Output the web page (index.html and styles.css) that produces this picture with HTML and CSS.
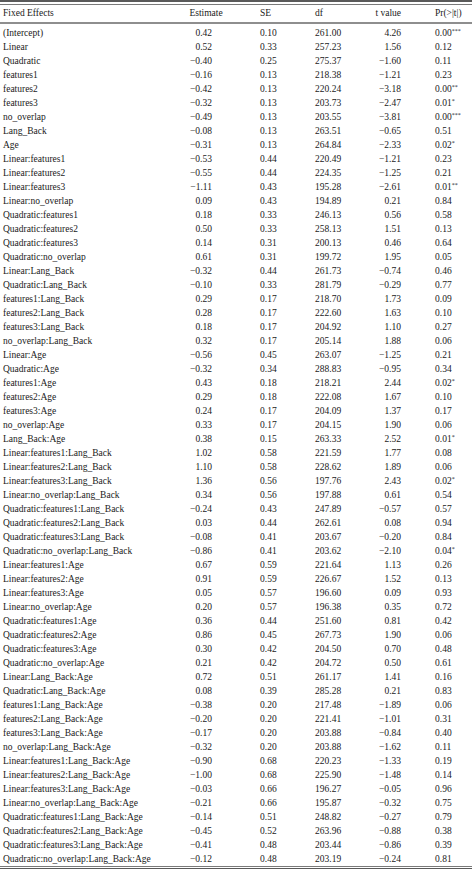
FILE: index.html
```html
<!DOCTYPE html>
<html>
<head>
<meta charset="utf-8">
<link rel="stylesheet" href="styles.css">
</head>
<body>
<div class="frame">
  <div class="rule-thick"></div>
  <div class="rule-thin"></div>
  <table class="fx">
    <colgroup>
      <col class="c-name"><col class="c-est"><col class="c-se"><col class="c-df"><col class="c-t"><col class="c-p">
    </colgroup>
    <thead>
      <tr class="head">
        <th class="name">Fixed Effects</th><th class="est-h">Estimate</th><th class="se">SE</th><th class="df">df</th><th class="t">t value</th><th class="p">Pr(&gt;|t|)</th>
      </tr>
    </thead>
    <tbody>
<tr><td class="name">(Intercept)</td><td class="est">0.42</td><td class="se">0.10</td><td class="df">261.00</td><td class="t">4.26</td><td class="p">0.00<sup>***</sup></td></tr>
<tr><td class="name">Linear</td><td class="est">0.52</td><td class="se">0.33</td><td class="df">257.23</td><td class="t">1.56</td><td class="p">0.12</td></tr>
<tr><td class="name">Quadratic</td><td class="est">−0.40</td><td class="se">0.25</td><td class="df">275.37</td><td class="t">−1.60</td><td class="p">0.11</td></tr>
<tr><td class="name">features1</td><td class="est">−0.16</td><td class="se">0.13</td><td class="df">218.38</td><td class="t">−1.21</td><td class="p">0.23</td></tr>
<tr><td class="name">features2</td><td class="est">−0.42</td><td class="se">0.13</td><td class="df">220.24</td><td class="t">−3.18</td><td class="p">0.00<sup>**</sup></td></tr>
<tr><td class="name">features3</td><td class="est">−0.32</td><td class="se">0.13</td><td class="df">203.73</td><td class="t">−2.47</td><td class="p">0.01<sup>*</sup></td></tr>
<tr><td class="name">no_overlap</td><td class="est">−0.49</td><td class="se">0.13</td><td class="df">203.55</td><td class="t">−3.81</td><td class="p">0.00<sup>***</sup></td></tr>
<tr><td class="name">Lang_Back</td><td class="est">−0.08</td><td class="se">0.13</td><td class="df">263.51</td><td class="t">−0.65</td><td class="p">0.51</td></tr>
<tr><td class="name">Age</td><td class="est">−0.31</td><td class="se">0.13</td><td class="df">264.84</td><td class="t">−2.33</td><td class="p">0.02<sup>*</sup></td></tr>
<tr><td class="name">Linear:features1</td><td class="est">−0.53</td><td class="se">0.44</td><td class="df">220.49</td><td class="t">−1.21</td><td class="p">0.23</td></tr>
<tr><td class="name">Linear:features2</td><td class="est">−0.55</td><td class="se">0.44</td><td class="df">224.35</td><td class="t">−1.25</td><td class="p">0.21</td></tr>
<tr><td class="name">Linear:features3</td><td class="est">−1.11</td><td class="se">0.43</td><td class="df">195.28</td><td class="t">−2.61</td><td class="p">0.01<sup>**</sup></td></tr>
<tr><td class="name">Linear:no_overlap</td><td class="est">0.09</td><td class="se">0.43</td><td class="df">194.89</td><td class="t">0.21</td><td class="p">0.84</td></tr>
<tr><td class="name">Quadratic:features1</td><td class="est">0.18</td><td class="se">0.33</td><td class="df">246.13</td><td class="t">0.56</td><td class="p">0.58</td></tr>
<tr><td class="name">Quadratic:features2</td><td class="est">0.50</td><td class="se">0.33</td><td class="df">258.13</td><td class="t">1.51</td><td class="p">0.13</td></tr>
<tr><td class="name">Quadratic:features3</td><td class="est">0.14</td><td class="se">0.31</td><td class="df">200.13</td><td class="t">0.46</td><td class="p">0.64</td></tr>
<tr><td class="name">Quadratic:no_overlap</td><td class="est">0.61</td><td class="se">0.31</td><td class="df">199.72</td><td class="t">1.95</td><td class="p">0.05</td></tr>
<tr><td class="name">Linear:Lang_Back</td><td class="est">−0.32</td><td class="se">0.44</td><td class="df">261.73</td><td class="t">−0.74</td><td class="p">0.46</td></tr>
<tr><td class="name">Quadratic:Lang_Back</td><td class="est">−0.10</td><td class="se">0.33</td><td class="df">281.79</td><td class="t">−0.29</td><td class="p">0.77</td></tr>
<tr><td class="name">features1:Lang_Back</td><td class="est">0.29</td><td class="se">0.17</td><td class="df">218.70</td><td class="t">1.73</td><td class="p">0.09</td></tr>
<tr><td class="name">features2:Lang_Back</td><td class="est">0.28</td><td class="se">0.17</td><td class="df">222.60</td><td class="t">1.63</td><td class="p">0.10</td></tr>
<tr><td class="name">features3:Lang_Back</td><td class="est">0.18</td><td class="se">0.17</td><td class="df">204.92</td><td class="t">1.10</td><td class="p">0.27</td></tr>
<tr><td class="name">no_overlap:Lang_Back</td><td class="est">0.32</td><td class="se">0.17</td><td class="df">205.14</td><td class="t">1.88</td><td class="p">0.06</td></tr>
<tr><td class="name">Linear:Age</td><td class="est">−0.56</td><td class="se">0.45</td><td class="df">263.07</td><td class="t">−1.25</td><td class="p">0.21</td></tr>
<tr><td class="name">Quadratic:Age</td><td class="est">−0.32</td><td class="se">0.34</td><td class="df">288.83</td><td class="t">−0.95</td><td class="p">0.34</td></tr>
<tr><td class="name">features1:Age</td><td class="est">0.43</td><td class="se">0.18</td><td class="df">218.21</td><td class="t">2.44</td><td class="p">0.02<sup>*</sup></td></tr>
<tr><td class="name">features2:Age</td><td class="est">0.29</td><td class="se">0.18</td><td class="df">222.08</td><td class="t">1.67</td><td class="p">0.10</td></tr>
<tr><td class="name">features3:Age</td><td class="est">0.24</td><td class="se">0.17</td><td class="df">204.09</td><td class="t">1.37</td><td class="p">0.17</td></tr>
<tr><td class="name">no_overlap:Age</td><td class="est">0.33</td><td class="se">0.17</td><td class="df">204.15</td><td class="t">1.90</td><td class="p">0.06</td></tr>
<tr><td class="name">Lang_Back:Age</td><td class="est">0.38</td><td class="se">0.15</td><td class="df">263.33</td><td class="t">2.52</td><td class="p">0.01<sup>*</sup></td></tr>
<tr><td class="name">Linear:features1:Lang_Back</td><td class="est">1.02</td><td class="se">0.58</td><td class="df">221.59</td><td class="t">1.77</td><td class="p">0.08</td></tr>
<tr><td class="name">Linear:features2:Lang_Back</td><td class="est">1.10</td><td class="se">0.58</td><td class="df">228.62</td><td class="t">1.89</td><td class="p">0.06</td></tr>
<tr><td class="name">Linear:features3:Lang_Back</td><td class="est">1.36</td><td class="se">0.56</td><td class="df">197.76</td><td class="t">2.43</td><td class="p">0.02<sup>*</sup></td></tr>
<tr><td class="name">Linear:no_overlap:Lang_Back</td><td class="est">0.34</td><td class="se">0.56</td><td class="df">197.88</td><td class="t">0.61</td><td class="p">0.54</td></tr>
<tr><td class="name">Quadratic:features1:Lang_Back</td><td class="est">−0.24</td><td class="se">0.43</td><td class="df">247.89</td><td class="t">−0.57</td><td class="p">0.57</td></tr>
<tr><td class="name">Quadratic:features2:Lang_Back</td><td class="est">0.03</td><td class="se">0.44</td><td class="df">262.61</td><td class="t">0.08</td><td class="p">0.94</td></tr>
<tr><td class="name">Quadratic:features3:Lang_Back</td><td class="est">−0.08</td><td class="se">0.41</td><td class="df">203.67</td><td class="t">−0.20</td><td class="p">0.84</td></tr>
<tr><td class="name">Quadratic:no_overlap:Lang_Back</td><td class="est">−0.86</td><td class="se">0.41</td><td class="df">203.62</td><td class="t">−2.10</td><td class="p">0.04<sup>*</sup></td></tr>
<tr><td class="name">Linear:features1:Age</td><td class="est">0.67</td><td class="se">0.59</td><td class="df">221.64</td><td class="t">1.13</td><td class="p">0.26</td></tr>
<tr><td class="name">Linear:features2:Age</td><td class="est">0.91</td><td class="se">0.59</td><td class="df">226.67</td><td class="t">1.52</td><td class="p">0.13</td></tr>
<tr><td class="name">Linear:features3:Age</td><td class="est">0.05</td><td class="se">0.57</td><td class="df">196.60</td><td class="t">0.09</td><td class="p">0.93</td></tr>
<tr><td class="name">Linear:no_overlap:Age</td><td class="est">0.20</td><td class="se">0.57</td><td class="df">196.38</td><td class="t">0.35</td><td class="p">0.72</td></tr>
<tr><td class="name">Quadratic:features1:Age</td><td class="est">0.36</td><td class="se">0.44</td><td class="df">251.60</td><td class="t">0.81</td><td class="p">0.42</td></tr>
<tr><td class="name">Quadratic:features2:Age</td><td class="est">0.86</td><td class="se">0.45</td><td class="df">267.73</td><td class="t">1.90</td><td class="p">0.06</td></tr>
<tr><td class="name">Quadratic:features3:Age</td><td class="est">0.30</td><td class="se">0.42</td><td class="df">204.50</td><td class="t">0.70</td><td class="p">0.48</td></tr>
<tr><td class="name">Quadratic:no_overlap:Age</td><td class="est">0.21</td><td class="se">0.42</td><td class="df">204.72</td><td class="t">0.50</td><td class="p">0.61</td></tr>
<tr><td class="name">Linear:Lang_Back:Age</td><td class="est">0.72</td><td class="se">0.51</td><td class="df">261.17</td><td class="t">1.41</td><td class="p">0.16</td></tr>
<tr><td class="name">Quadratic:Lang_Back:Age</td><td class="est">0.08</td><td class="se">0.39</td><td class="df">285.28</td><td class="t">0.21</td><td class="p">0.83</td></tr>
<tr><td class="name">features1:Lang_Back:Age</td><td class="est">−0.38</td><td class="se">0.20</td><td class="df">217.48</td><td class="t">−1.89</td><td class="p">0.06</td></tr>
<tr><td class="name">features2:Lang_Back:Age</td><td class="est">−0.20</td><td class="se">0.20</td><td class="df">221.41</td><td class="t">−1.01</td><td class="p">0.31</td></tr>
<tr><td class="name">features3:Lang_Back:Age</td><td class="est">−0.17</td><td class="se">0.20</td><td class="df">203.88</td><td class="t">−0.84</td><td class="p">0.40</td></tr>
<tr><td class="name">no_overlap:Lang_Back:Age</td><td class="est">−0.32</td><td class="se">0.20</td><td class="df">203.88</td><td class="t">−1.62</td><td class="p">0.11</td></tr>
<tr><td class="name">Linear:features1:Lang_Back:Age</td><td class="est">−0.90</td><td class="se">0.68</td><td class="df">220.23</td><td class="t">−1.33</td><td class="p">0.19</td></tr>
<tr><td class="name">Linear:features2:Lang_Back:Age</td><td class="est">−1.00</td><td class="se">0.68</td><td class="df">225.90</td><td class="t">−1.48</td><td class="p">0.14</td></tr>
<tr><td class="name">Linear:features3:Lang_Back:Age</td><td class="est">−0.03</td><td class="se">0.66</td><td class="df">196.27</td><td class="t">−0.05</td><td class="p">0.96</td></tr>
<tr><td class="name">Linear:no_overlap:Lang_Back:Age</td><td class="est">−0.21</td><td class="se">0.66</td><td class="df">195.87</td><td class="t">−0.32</td><td class="p">0.75</td></tr>
<tr><td class="name">Quadratic:features1:Lang_Back:Age</td><td class="est">−0.14</td><td class="se">0.51</td><td class="df">248.82</td><td class="t">−0.27</td><td class="p">0.79</td></tr>
<tr><td class="name">Quadratic:features2:Lang_Back:Age</td><td class="est">−0.45</td><td class="se">0.52</td><td class="df">263.96</td><td class="t">−0.88</td><td class="p">0.38</td></tr>
<tr><td class="name">Quadratic:features3:Lang_Back:Age</td><td class="est">−0.41</td><td class="se">0.48</td><td class="df">203.44</td><td class="t">−0.86</td><td class="p">0.39</td></tr>
<tr><td class="name">Quadratic:no_overlap:Lang_Back:Age</td><td class="est">−0.12</td><td class="se">0.48</td><td class="df">203.19</td><td class="t">−0.24</td><td class="p">0.81</td></tr>
    </tbody>
  </table>
  <div class="rule-thin bottom"></div>
  <div class="rule-thick"></div>
</div>
</body>
</html>
```

FILE: styles.css
```css
html, body {
  margin: 0;
  padding: 0;
  background: #ffffff;
}
body {
  font-family: "Liberation Serif", "Times New Roman", serif;
  font-size: 9.5px;
  color: #1a1a1a;
}
.frame {
  width: 472px;
}
.rule-thick {
  height: 2px;
  background: #5a5a5a;
}
.rule-thin {
  height: 1px;
  margin-top: 2px;
  background: #7a7a7a;
}
.rule-thin.bottom {
  margin-top: 0;
  margin-bottom: 1px;
}
.fx {
  width: 472px;
  border-collapse: collapse;
  table-layout: fixed;
}
.c-name { width: 172px; }
.c-est { width: 68px; }
.c-se { width: 60px; }
.c-df { width: 60px; }
.c-t { width: 60px; }
.c-p { width: 52px; }
.fx th, .fx td {
  padding: 0;
  font-weight: normal;
  white-space: nowrap;
  line-height: 14px;
  height: 14px;
}
.fx thead th {
  height: 17px;
  line-height: 17px;
  border-bottom: 2px solid #8e8e8e;
}
.fx tbody tr:first-child td {
  padding-top: 2px;
}
.fx .name { text-align: left; padding-left: 3px; }
.fx .est-h { text-align: center; }
.fx .est { text-align: right; padding-right: 28px; }
.fx .se { text-align: left; padding-left: 20px; }
.fx .df { text-align: left; padding-left: 15px; }
.fx .t { text-align: right; padding-right: 19px; }
.fx .p { text-align: left; padding-left: 15px; }
.fx sup {
  font-size: 6px;
  line-height: 0;
  vertical-align: 3px;
}
```
